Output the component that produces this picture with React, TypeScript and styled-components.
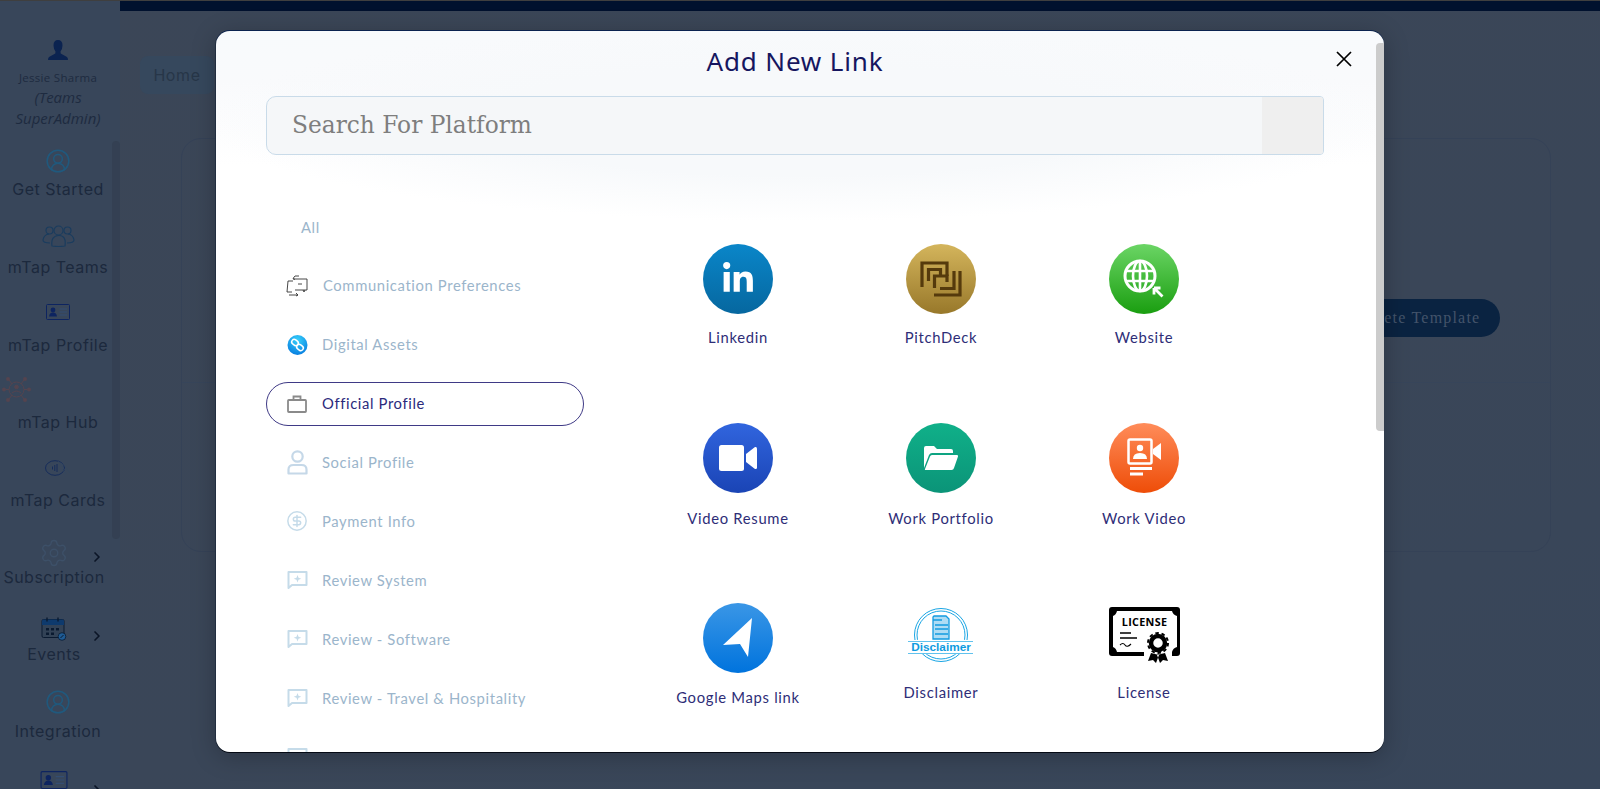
import React from "react";
import styled, { createGlobalStyle } from "styled-components";
import { FaLinkedinIn } from "react-icons/fa";
import { CircleUserRound, Settings, ChevronRight, CircleDollarSign } from "lucide-react";

const Global = createGlobalStyle`
  html, body { margin: 0; padding: 0; width: 1600px; height: 789px; overflow: hidden; background: #3a4658; }
  * { box-sizing: border-box; }
`;

const Page = styled.div`
  position: relative;
  width: 1600px;
  height: 789px;
  overflow: hidden;
  display: flex;
  border-top: 1px solid #3f3f3f;
  background: linear-gradient(160deg, #3b4657 0%, #3a4658 60%, #38465a 100%);
`;

const Sidebar = styled.aside`
  position: relative;
  flex: 0 0 120px;
  height: 788px;
  overflow: hidden;
  background: #38465a;
  padding-top: 39px;
  display: flex;
  flex-direction: column;
  align-items: stretch;
`;

const SideScroll = styled.div`
  position: absolute;
  right: 0;
  top: 140px;
  width: 8px;
  height: 398px;
  border-radius: 4px;
  background: #344053;
`;

const Profile = styled.div`
  display: flex;
  flex-direction: column;
  align-items: center;
  width: 116px;
`;

const Name = styled.div`
  margin-top: 10px;
  font: 400 11.5px/15px "Open Sans", sans-serif;
  letter-spacing: 0.3px;
  color: #1e2b40;
`;

const RoleText = styled.div`
  margin-top: 2px;
  text-align: center;
  font: italic 400 15px/21px "Open Sans", sans-serif;
  color: #1e2b40;
  width: 100px;
`;

const NavItem = styled.div<{ $top: number; $gap: number; $arrow?: boolean }>`
  position: relative;
  margin-top: ${(p) => p.$top}px;
  width: ${(p) => (p.$arrow ? 108 : 116)}px;
  display: flex;
  flex-direction: column;
  align-items: center;
  gap: ${(p) => p.$gap}px;
`;

const NavIcon = styled.div<{ $h: number; $shift?: number }>`
  height: ${(p) => p.$h}px;
  display: flex;
  align-items: center;
  justify-content: center;
  transform: translateX(${(p) => p.$shift ?? 0}px);
`;

const NavLabel = styled.div`
  font: 400 16px/18px "Inter", sans-serif;
  letter-spacing: 0.5px;
  color: #1c293d;
  white-space: nowrap;
`;

const Arrow = styled.span<{ $top: number }>`
  position: absolute;
  left: 89px;
  top: ${(p) => p.$top}px;
  display: flex;
  color: #0b1526;
`;

const Main = styled.main`
  flex: 1;
  min-width: 0;
  display: flex;
  flex-direction: column;
`;

const TopBar = styled.div`
  height: 10px;
  background: #00112e;
`;

const Crumb = styled.div`
  margin: 45px 0 0 20px;
  width: 74px;
  height: 38px;
  border-radius: 8px;
  background: #36485d;
  display: flex;
  align-items: center;
  justify-content: center;
  font: 400 16px/1 "Inter", sans-serif;
  letter-spacing: 0.6px;
  color: #273648;
`;

const Card = styled.section`
  margin: 44px 0 0 61px;
  width: 1370px;
  height: 414px;
  border: 1px solid #354257;
  border-radius: 20px;
  display: flex;
  flex-direction: column;
  align-items: flex-end;
`;

const CardTop = styled.div`
  width: 100%;
  height: 244px;
  border-bottom: 1px solid #37455a;
  display: flex;
  justify-content: flex-end;
  padding: 160px 50px 0 0;
`;

const TemplateBtn = styled.div`
  width: 165px;
  height: 38px;
  border-radius: 19px;
  background: #0a2341;
  display: flex;
  align-items: center;
  justify-content: center;
  padding-left: 3px;
  font: 400 16px/1 "Liberation Serif", serif;
  letter-spacing: 1.2px;
  color: #43536a;
`;

const Modal = styled.div`
  position: absolute;
  left: 216px;
  top: 30px;
  width: 1168px;
  height: 721px;
  border-radius: 14px;
  overflow: hidden;
  padding: 10px 60px 0 50px;
  background:
    radial-gradient(ellipse 595px 100px at 50% 90px, #f7f9fb 55%, rgba(255, 255, 255, 0) 100%),
    linear-gradient(180deg, #f8fafc 0, #f9fafc 50px, #fff 135px);
  box-shadow: 0 -1px 0 #0b2350, 0 1px 0 #050a14, -1px 0 0 #222e40, 0 4px 24px rgba(0, 0, 0, 0.25);
`;

const ModalThumb = styled.div`
  position: absolute;
  right: 0;
  top: 12px;
  width: 8px;
  height: 388px;
  border-radius: 4px 0 0 4px;
  background: #cccccc;
`;

const CloseBtn = styled.button`
  position: absolute;
  left: 1120px;
  top: 20px;
  width: 16px;
  height: 16px;
  padding: 0;
  border: 0;
  background: none;
  display: flex;
`;

const Title = styled.h2`
  margin: 0;
  text-align: center;
  font: 400 26px/40px "Noto Sans", sans-serif;
  letter-spacing: 0.85px;
  color: #16165f;
`;

const SearchBar = styled.div`
  margin-top: 15px;
  width: 1058px;
  height: 59px;
  border: 1px solid #c9dbe9;
  border-radius: 10px 4px 4px 10px;
  display: flex;
  overflow: hidden;
  background: #f5f7f9;
`;

const SearchInput = styled.input`
  flex: 1;
  min-width: 0;
  border: 0;
  outline: 0;
  background: transparent;
  padding: 0 0 2px 25px;
  font: 300 23.3px/1 "DejaVu Serif", serif;
  color: #7c7c7c;
  &::placeholder { color: #7e7e7e; opacity: 1; }
`;

const SearchAddon = styled.div`
  flex: 0 0 61px;
  background: #efefef;
`;

const Body = styled.div`
  margin-top: 50px;
  display: flex;
`;

const CategoryList = styled.ul`
  flex: 0 0 318px;
  margin: 0;
  padding: 0;
  list-style: none;
`;

const Category = styled.li<{ $active?: boolean; $plain?: boolean }>`
  height: 44px;
  margin-bottom: 14.9px;
  display: flex;
  align-items: center;
  gap: 14px;
  padding-left: ${(p) => (p.$plain ? 34 : 19)}px;
  border-radius: 22px;
  border: 1px solid ${(p) => (p.$active ? "#3f3a86" : "transparent")};
  font: 400 14.8px/1 "Lato", sans-serif;
  letter-spacing: 0.62px;
  color: ${(p) => (p.$active ? "#2b2a7c" : "#9bb5cb")};
  white-space: nowrap;
`;

const CatIcon = styled.span`
  flex: 0 0 22px;
  height: 22px;
  display: flex;
  align-items: center;
  justify-content: center;
`;

const Grid = styled.div`
  margin: 39px 0 0 52.5px;
  display: grid;
  grid-template-columns: repeat(3, 203px);
  grid-template-rows: 178.6px 180.6px auto;
`;

const Tile = styled.div<{ $gap: number; $inset?: boolean }>`
  display: flex;
  flex-direction: column;
  align-items: center;
  gap: ${(p) => p.$gap}px;
  padding-top: ${(p) => (p.$inset ? 4 : 0)}px;
`;

const Bubble = styled.div<{ $from: string; $to: string }>`
  width: 70px;
  height: 70px;
  border-radius: 50%;
  background: linear-gradient(180deg, ${(p) => p.$from}, ${(p) => p.$to});
  display: flex;
  align-items: center;
  justify-content: center;
  color: #fff;
`;

const Art = styled.div`
  width: 72px;
  height: 56px;
  display: flex;
  align-items: center;
  justify-content: center;
`;

const TileLabel = styled.div`
  font: 400 14.8px/20px "Lato", sans-serif;
  letter-spacing: 0.7px;
  color: #2e2d77;
  white-space: nowrap;
`;

const ReviewIcon = () => (
  <svg width="21" height="20" viewBox="0 0 21 20" fill="none">
    <path d="M1.500 2h18v13H5l-3.500 3z" stroke="#c5dbe9" strokeWidth="2" strokeLinejoin="round" />
    <path d="M10.500 5l1 2.800 2.800 1-2.800 1-1 2.800-1-2.800-2.800-1 2.800-1z" fill="#c5dbe9" />
  </svg>
);

const CommIcon = () => (
  <svg width="23" height="22" viewBox="0 0 23 22" fill="none" stroke="#333" strokeWidth="0.9">
    <path d="M7 4h14v11H9" />
    <path d="M7 6H2L1 17h5" />
    <path d="M13 1h-4l-2 2.500 2 1" />
    <path d="M3 20h9l-2-2M12 20l-2 1" />
    <path d="M12 9h4" />
    <path d="M17 15l1 2 1-2" />
  </svg>
);

const LinkBall = () => (
  <svg width="21" height="22" viewBox="0 0 21 22">
    <defs>
      <radialGradient id="lb" cx="50%" cy="25%" r="80%">
        <stop offset="0" stopColor="#37d0fb" />
        <stop offset="1" stopColor="#0579de" />
      </radialGradient>
    </defs>
    <circle cx="10.500" cy="11" r="10" fill="url(#lb)" />
    <g fill="none" stroke="#fff" strokeWidth="1.500">
      <rect x="4.500" y="6" width="7" height="5" rx="2.500" transform="rotate(38 8 8.500)" />
      <rect x="9.500" y="11" width="7" height="5" rx="2.500" transform="rotate(38 13 13.500)" />
    </g>
  </svg>
);

const CaseIcon = () => (
  <svg width="20" height="18" viewBox="0 0 20 18" fill="none" stroke="#8a8a8a" strokeWidth="1.800">
    <rect x="1" y="5" width="18" height="12" rx="0.800" />
    <path d="M6.500 5V1.500h7V5" />
  </svg>
);

const SocialIcon = () => (
  <svg width="21" height="25" viewBox="0 0 21 25" fill="none" stroke="#c5d8e8" strokeWidth="2.200">
    <circle cx="10.500" cy="6.500" r="5.200" />
    <path d="M1.500 23.500v-4q0-4.500 5-4.500h8q5 0 5 4.500v4z" strokeLinejoin="round" />
  </svg>
);

const PitchMark = () => (
  <svg width="42" height="36" viewBox="0 0 42 36" fill="none" stroke="#553a0c" strokeWidth="3.200">
    <path d="M2 26V2h25v13" />
    <path d="M8.500 20V8.500h12V15" />
    <path d="M14 34h26V10" />
    <path d="M20 27.500h14V10" />
    <path d="M27 21V15H14.500v12" />
  </svg>
);

const GlobeMark = () => (
  <svg width="44" height="42" viewBox="0 0 44 42" fill="none" stroke="#fff" strokeWidth="2.600">
    <circle cx="18" cy="18" r="15" strokeWidth="3" />
    <ellipse cx="18" cy="18" rx="7" ry="15" />
    <path d="M18 3v30M4 13h28M4 23h28" />
    <path d="M32 30h6.500M32 30v6.500M32.500 30.500l8 8" strokeWidth="2.800" />
  </svg>
);

const CameraMark = () => (
  <svg width="38" height="26" viewBox="0 0 38 26" fill="#fff">
    <rect x="0" y="0" width="25" height="26" rx="2.500" />
    <path d="M27 9l9-7q2-.5 2 1.500v19q0 2-2 1.500l-9-7z" />
  </svg>
);

const FolderMark = () => (
  <svg width="34" height="24" viewBox="0 0 34 24" fill="#fff">
    <path d="M0 22V2q0-2 2-2h8l3 3h14q2 0 2 2v2H8q-2 0-3 2z" />
    <path d="M8 9h25q1.500 0 1 1.500l-4 11.500q-.5 2-2.500 2H2q-1.500 0-1-1l5-12.500q.5-1.500 2-1.500z" />
  </svg>
);

const WorkVideoMark = () => (
  <svg width="34" height="40" viewBox="0 0 34 40">
    <rect x="1.500" y="1.500" width="23" height="24" rx="1.500" fill="none" stroke="#fff" strokeWidth="2.500" />
    <circle cx="13" cy="10" r="3.200" fill="#fff" />
    <path d="M6 21q0-6 7-6t7 6z" fill="#fff" />
    <path d="M26 11l8-6v17l-8-6z" fill="#fff" />
    <rect x="3" y="29" width="22" height="3" fill="#fff" />
    <rect x="3" y="34.500" width="13" height="3" fill="#fff" />
  </svg>
);

const MapMark = () => (
  <svg width="30" height="40" viewBox="0 0 30 40">
    <path d="M29 0L25 39 17 26 0 27z" fill="#fff" />
  </svg>
);

const DisclaimerArt = () => (
  <svg width="66" height="56" viewBox="0 0 66 56" fill="none">
    <circle cx="33" cy="28" r="26.500" stroke="#19a5e4" strokeWidth="1" />
    <circle cx="33" cy="28" r="24" stroke="#19a5e4" strokeWidth="1" />
    <rect x="0" y="33" width="66" height="14" fill="#fff" />
    <path d="M26 9h12l3 3v20H25V10z" fill="#aedcf4" stroke="#129be0" strokeWidth="1.300" />
    <path d="M25 13h9M27 18h13M27 22h13M27 27h13" stroke="#129be0" strokeWidth="1.300" />
    <path d="M0 34.500h65M0 46.500h65" stroke="#39b3e8" strokeWidth="0.800" />
    <text x="33" y="44" textAnchor="middle" fontFamily="Liberation Sans, sans-serif" fontWeight="700" fontSize="11.800" fill="#0f9be0">Disclaimer</text>
  </svg>
);

const LicenseArt = () => (
  <svg width="71" height="56" viewBox="0 0 71 56" fill="none">
    <rect x="0" y="0" width="71" height="49" rx="3" fill="#000" />
    <path d="M8 4H63Q64 8 68 9V40Q64 41 63 45H8Q7 41 4 40V9Q7 8 8 4z" fill="#fff" />
    <rect x="35" y="40" width="28" height="16" fill="#fff" />
    <text x="35.500" y="19" textAnchor="middle" fontFamily="Open Sans, sans-serif" fontWeight="700" fontSize="10.800" letterSpacing="0.300" fill="#000">LICENSE</text>
    <path d="M11 26h11M11 31h17" stroke="#000" strokeWidth="1.300" />
    <path d="M11 38q3-3 5 0t6-1" stroke="#000" strokeWidth="1.100" />
    <path d="M42 46l-3 8 5-1 3 3 3-8zM56 46l3 8-5-1-3 3-3-8z" fill="#000" />
    <circle cx="49" cy="36" r="7" stroke="#000" strokeWidth="4.500" />
    <circle cx="49" cy="36" r="10" stroke="#000" strokeWidth="2" strokeDasharray="3.500 2.800" />
  </svg>
);

const TeamIcon = () => (
  <svg width="33" height="22" viewBox="0 0 33 22" fill="none" stroke="#1a3c5e" strokeWidth="1.200">
    <circle cx="7.500" cy="5.500" r="3.500" />
    <circle cx="25.500" cy="5.500" r="3.500" />
    <circle cx="16.500" cy="5.500" r="4.500" />
    <path d="M10 21q-1.500-10 6.500-10.500T23 21q-6.500 1-13 0z" />
    <path d="M8 18q-7 0-7-3 1-5.500 6-6M25 18q7 0 7-3-1-5.500-6-6" />
  </svg>
);

const IdCard = ({ w, h }: { w: number; h: number }) => (
  <svg width={w} height={h} viewBox="0 0 24 16" fill="none">
    <rect x="0.500" y="0.500" width="23" height="15" rx="1" stroke="#0d2460" />
    <circle cx="7" cy="6" r="2.400" fill="#0d2460" />
    <path d="M3 12.500q.5-4 4-4t4 4z" fill="#0d2460" />
    <path d="M13.500 5H21M13.500 8H21M13.500 11H21" stroke="#334d73" />
  </svg>
);

const HubIcon = () => (
  <svg width="29" height="27" viewBox="0 0 29 27" fill="none" stroke="#54444f" strokeWidth="1">
    <circle cx="14.500" cy="13.500" r="7.500" />
    <circle cx="14.500" cy="11" r="1.800" fill="#54444f" />
    <path d="M10 17q4.500-4 9 0" />
    <g fill="#54444f" stroke="none">
      <circle cx="6" cy="3" r="2" /><circle cx="23" cy="3" r="2" />
      <circle cx="2" cy="13.500" r="2" /><circle cx="27" cy="13.500" r="2" />
      <circle cx="6" cy="24" r="2" /><circle cx="23" cy="24" r="2" />
    </g>
    <path d="M7 4l3 4M22 4l-3 4M4 13.500h3M22 13.500h3M7 23l3-4M22 23l-3-4" />
  </svg>
);

const TapIcon = () => (
  <svg width="26" height="16" viewBox="0 0 26 16" fill="none" stroke="#12295a" strokeWidth="0.900">
    <ellipse cx="10" cy="8" rx="9.500" ry="7.300" />
    <path d="M7.500 6.500v3M9.800 5v6M12 4v8" />
    <path d="M13 1.500l6 3.500 6 8M17 9l4 5M15 4l5 6" stroke="#33465f" strokeWidth="0.800" />
  </svg>
);

const CalendarIcon = () => (
  <svg width="26" height="24" viewBox="0 0 26 24" fill="none">
    <rect x="1" y="2.500" width="22" height="18" rx="1.500" fill="#324256" stroke="#0a1a30" />
    <path d="M1 4q0-1.500 1.500-1.500h19Q23 2.500 23 4v4H1z" fill="#0e3a6d" />
    <path d="M6 .5v4M17 .5v4" stroke="#0a1a30" strokeWidth="1.400" />
    <g fill="#0a1a30">
      <rect x="5" y="11" width="3" height="2.500" /><rect x="10" y="11" width="3" height="2.500" /><rect x="15" y="11" width="3" height="2.500" />
      <rect x="5" y="15.500" width="3" height="2.500" /><rect x="10" y="15.500" width="3" height="2.500" />
    </g>
    <circle cx="21" cy="19.500" r="3.800" fill="#1f5c95" stroke="#0a1a30" strokeWidth="0.800" />
    <path d="M19.500 21l3-3" stroke="#0a1a30" />
  </svg>
);

const Avatar = () => (
  <svg width="20" height="20" viewBox="0 0 20 20" fill="#0b2350">
    <path d="M10 0q4.500 0 4.500 5.500 0 3-2 6l.2 2 6.300 3.500q1 1 1 3H0q0-2 1-3l6.300-3.500.2-2q-2-3-2-6Q5.500 0 10 0z" />
  </svg>
);

const categories = [
  { label: "Communication Preferences", icon: <CommIcon /> },
  { label: "Digital Assets", icon: <LinkBall /> },
  { label: "Official Profile", icon: <CaseIcon />, active: true },
  { label: "Social Profile", icon: <SocialIcon /> },
  { label: "Payment Info", icon: <CircleDollarSign size={22} color="#c5dbe9" strokeWidth={1.6} /> },
  { label: "Review System", icon: <ReviewIcon /> },
  { label: "Review - Software", icon: <ReviewIcon /> },
  { label: "Review - Travel & Hospitality", icon: <ReviewIcon /> },
  { label: "Review - Home Service Provider", icon: <ReviewIcon /> },
];

const tiles = [
  { label: "Linkedin", gap: 13, from: "#0a86c9", to: "#06679f", mark: <FaLinkedinIn size={34} /> },
  { label: "PitchDeck", gap: 13, from: "#d4b55c", to: "#98782a", mark: <PitchMark /> },
  { label: "Website", gap: 13, from: "#6bd565", to: "#1a9e10", mark: <GlobeMark /> },
  { label: "Video Resume", gap: 15, from: "#3165de", to: "#1a44b5", mark: <CameraMark /> },
  { label: "Work Portfolio", gap: 15, from: "#10b089", to: "#0b9478", mark: <FolderMark /> },
  { label: "Work Video", gap: 15, from: "#ff8c5a", to: "#ee4d08", mark: <WorkVideoMark /> },
  { label: "Google Maps link", gap: 14, from: "#3a96e6", to: "#0073dd", mark: <MapMark /> },
];

export default function App() {
  return (
    <Page>
      <Global />
      <Sidebar>
        <Profile>
          <Avatar />
          <Name>Jessie Sharma</Name>
          <RoleText>(Teams SuperAdmin)</RoleText>
        </Profile>
        <NavItem $top={20} $gap={7}>
          <NavIcon $h={24}><CircleUserRound size={26} color="#20597d" strokeWidth={1.4} /></NavIcon>
          <NavLabel>Get Started</NavLabel>
        </NavItem>
        <NavItem $top={24} $gap={8}>
          <NavIcon $h={28}><TeamIcon /></NavIcon>
          <NavLabel>mTap Teams</NavLabel>
        </NavItem>
        <NavItem $top={28} $gap={16}>
          <NavIcon $h={16}><IdCard w={24} h={16} /></NavIcon>
          <NavLabel>mTap Profile</NavLabel>
        </NavItem>
        <NavItem $top={22} $gap={11}>
          <NavIcon $h={26} $shift={-42}><HubIcon /></NavIcon>
          <NavLabel>mTap Hub</NavLabel>
        </NavItem>
        <NavItem $top={29} $gap={15}>
          <NavIcon $h={16}><TapIcon /></NavIcon>
          <NavLabel>mTap Cards</NavLabel>
        </NavItem>
        <NavItem $top={31} $gap={2} $arrow>
          <NavIcon $h={26}><Settings size={30} color="#3d5068" strokeWidth={1.1} /></NavIcon>
          <NavLabel>Subscription</NavLabel>
          <Arrow $top={9}><ChevronRight size={16} strokeWidth={2.5} /></Arrow>
        </NavItem>
        <NavItem $top={30} $gap={3} $arrow>
          <NavIcon $h={26}><CalendarIcon /></NavIcon>
          <NavLabel>Events</NavLabel>
          <Arrow $top={12}><ChevronRight size={16} strokeWidth={2.5} /></Arrow>
        </NavItem>
        <NavItem $top={27} $gap={8}>
          <NavIcon $h={24}><CircleUserRound size={26} color="#20597d" strokeWidth={1.4} /></NavIcon>
          <NavLabel>Integration</NavLabel>
        </NavItem>
        <NavItem $top={31} $gap={8} $arrow>
          <NavIcon $h={18}><IdCard w={28} h={18} /></NavIcon>
          <Arrow $top={11}><ChevronRight size={16} strokeWidth={2.5} /></Arrow>
        </NavItem>
        <SideScroll />
      </Sidebar>
      <Main>
        <TopBar />
        <Crumb>Home</Crumb>
        <Card>
          <CardTop>
            <TemplateBtn>Delete Template</TemplateBtn>
          </CardTop>
        </Card>
      </Main>
      <Modal>
        <Title>Add New Link</Title>
        <CloseBtn aria-label="Close">
          <svg width="16" height="16" viewBox="0 0 16 16" stroke="#000" strokeWidth="1.700">
            <path d="M1 1l14 14M15 1L1 15" />
          </svg>
        </CloseBtn>
        <ModalThumb />
        <SearchBar>
          <SearchInput placeholder="Search For Platform" readOnly />
          <SearchAddon />
        </SearchBar>
        <Body>
          <CategoryList>
            <Category $plain>All</Category>
            {categories.map((c) => (
              <Category key={c.label} $active={c.active}>
                <CatIcon>{c.icon}</CatIcon>
                {c.label}
              </Category>
            ))}
          </CategoryList>
          <Grid>
            {tiles.map((t) => (
              <Tile key={t.label} $gap={t.gap}>
                <Bubble $from={t.from} $to={t.to}>{t.mark}</Bubble>
                <TileLabel>{t.label}</TileLabel>
              </Tile>
            ))}
            <Tile $inset $gap={19}>
              <Art><DisclaimerArt /></Art>
              <TileLabel>Disclaimer</TileLabel>
            </Tile>
            <Tile $inset $gap={19}>
              <Art><LicenseArt /></Art>
              <TileLabel>License</TileLabel>
            </Tile>
          </Grid>
        </Body>
      </Modal>
    </Page>
  );
}
